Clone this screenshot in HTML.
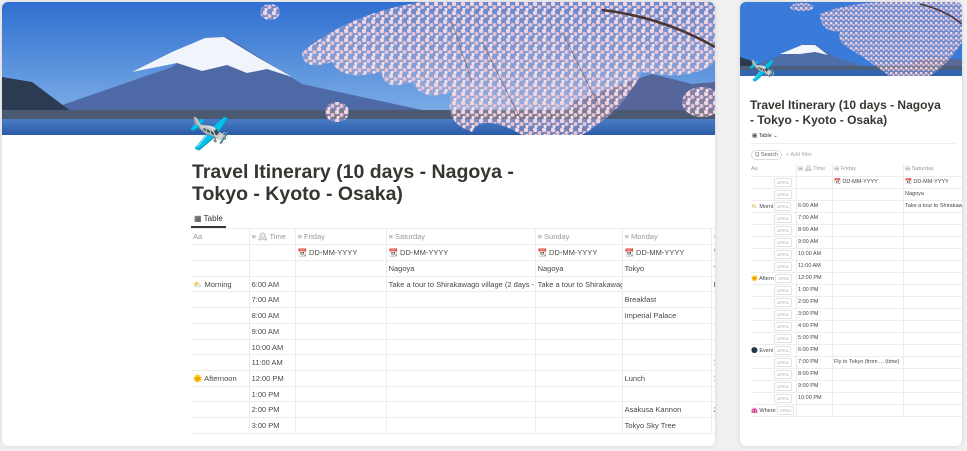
<!DOCTYPE html>
<html><head><meta charset="utf-8"><style>
*{margin:0;padding:0;box-sizing:border-box}
body{width:967px;height:451px;background:#f0f0f0;font-family:"Liberation Sans",sans-serif;color:#37352f;position:relative;overflow:hidden}
.card{position:absolute;background:#fff;border-radius:6px;overflow:hidden;box-shadow:0 0 4px rgba(0,0,0,.12)}
.abs{position:absolute}
table{border-collapse:collapse;position:absolute;table-layout:fixed;color:#4a4843}
td{border-bottom:1px solid #ededec;border-right:1px solid #ededec;white-space:nowrap;overflow:hidden;vertical-align:middle}
td:last-child{border-right:none}
.h td{color:#9b9a97}
.o{display:inline-block;border:1px solid #e3e3e3;border-radius:2px;color:#aaa;font-size:4px;padding:1px 2px;line-height:5px;margin-left:1px}
.r td:first-child{text-align:right;padding-right:4px}
</style></head><body>
<svg width="0" height="0" style="position:absolute"><defs>
<pattern id="bl" width="9" height="9" patternUnits="userSpaceOnUse"><rect width="9" height="9" fill="#d9b3c6" opacity=".35"/><circle cx="2" cy="2" r="2.3" fill="#f1d6e2"/><circle cx="6.5" cy="5" r="2" fill="#e7c3d4"/><circle cx="3" cy="7.5" r="1.6" fill="#f6e2ea"/></pattern>
<pattern id="bs" width="5" height="5" patternUnits="userSpaceOnUse"><rect width="5" height="5" fill="#d9b3c6" opacity=".35"/><circle cx="1.2" cy="1.2" r="1.3" fill="#f1d6e2"/><circle cx="3.6" cy="3" r="1.1" fill="#e7c3d4"/></pattern>
</defs></svg>

<div class="card" style="left:2px;top:2px;width:713px;height:444px">
<svg class="abs" style="left:0;top:0" width="713" height="133" viewBox="0 0 713 133">
<defs><linearGradient id="sk" x1="0" y1="0" x2="0" y2="1"><stop offset="0" stop-color="#2f6fd0"/><stop offset="1" stop-color="#8ab8ea"/></linearGradient>
<linearGradient id="lk" x1="0" y1="0" x2="0" y2="1"><stop offset="0" stop-color="#4a7cc4"/><stop offset="1" stop-color="#2a5aa8"/></linearGradient></defs>
<rect width="713" height="133" fill="url(#sk)"/>
<path d="M40 110 L170 65 L205 36 L225 35 L300 82 L420 108 L40 112Z" fill="#4d6aa6"/>
<path d="M130 70 L170 50 L203 36 L222 35 L255 55 L290 75 L265 67 L245 71 L225 63 L200 69 L175 61Z" fill="#f1f4fa"/>
<path d="M0 75 L30 80 L70 110 L100 118 L0 120Z" fill="#2c3b52"/>
<path d="M570 100 L620 82 L650 72 L690 82 L713 80 L713 120 L560 120Z" fill="#56669a"/>
<rect y="108" width="713" height="10" fill="#4b5a72"/>
<rect y="117" width="713" height="16" fill="url(#lk)"/>
<g fill="url(#bl)">
<path d="M300 50 Q350 10 420 0 L713 0 L713 60 Q690 80 640 70 Q620 110 580 133 L520 133 Q480 110 470 130 Q440 120 450 90 Q420 100 410 80 Q380 90 380 70 Q340 80 330 60 Q300 70 300 50Z"/>
<ellipse cx="700" cy="100" rx="20" ry="15"/><ellipse cx="335" cy="110" rx="12" ry="10"/><ellipse cx="268" cy="10" rx="10" ry="8"/>
</g>
<path d="M600 8 Q660 15 713 45" stroke="#4a3530" stroke-width="2.5" fill="none"/>
<path d="M480 40 L520 120 M560 30 L600 110 M450 20 L470 80" stroke="#6a4a4a" stroke-width="1" fill="none" opacity=".5"/>
</svg>
<div class="abs" style="left:186px;top:112px;font-size:34px">🛩️</div>
<div class="abs" style="left:190px;top:159px;font-size:19.5px;font-weight:bold;line-height:22px;color:#37352f">Travel Itinerary (10 days - Nagoya -<br>Tokyo - Kyoto - Osaka)</div>
<div class="abs" style="left:192px;top:212px;font-size:8px;">&#9638; Table</div>
<div class="abs" style="left:189px;top:224px;width:35px;height:2px;background:#37352f"></div>
<table style="left:189px;top:226px;width:560px;font-size:7.5px;border-top:1px solid #ededec">
<colgroup><col width="58"><col width="46"><col width="91"><col width="149"><col width="87"><col width="89"><col width="40"></colgroup>
<tr class="h" style="height:16px"><td>&nbsp;Aa</td><td>&nbsp;≡ 🕰 Time</td><td>&nbsp;≡ Friday</td><td>&nbsp;≡ Saturday</td><td>&nbsp;≡ Sunday</td><td>&nbsp;≡ Monday</td><td>&nbsp;≡</td></tr>
<tr style="height:16px"><td></td><td></td><td>&nbsp;📆 DD-MM-YYYY</td><td>&nbsp;📆 DD-MM-YYYY</td><td>&nbsp;📆 DD-MM-YYYY</td><td>&nbsp;📆 DD-MM-YYYY</td><td>&nbsp;📆</td></tr>
<tr style="height:16px"><td></td><td></td><td></td><td>&nbsp;Nagoya</td><td>&nbsp;Nagoya</td><td>&nbsp;Tokyo</td><td>&nbsp;T</td></tr>
<tr style="height:15px"><td>&nbsp;⛅ Morning</td><td>&nbsp;6:00 AM</td><td></td><td>&nbsp;Take a tour to Shirakawago village (2 days - 1</td><td>&nbsp;Take a tour to Shirakawago</td><td></td><td>&nbsp;D</td></tr>
<tr style="height:16px"><td></td><td>&nbsp;7:00 AM</td><td></td><td></td><td></td><td>&nbsp;Breakfast</td><td></td></tr>
<tr style="height:16px"><td></td><td>&nbsp;8:00 AM</td><td></td><td></td><td></td><td>&nbsp;Imperial Palace</td><td></td></tr>
<tr style="height:16px"><td></td><td>&nbsp;9:00 AM</td><td></td><td></td><td></td><td></td><td></td></tr>
<tr style="height:15px"><td></td><td>&nbsp;10:00 AM</td><td></td><td></td><td></td><td></td><td></td></tr>
<tr style="height:16px"><td></td><td>&nbsp;11:00 AM</td><td></td><td></td><td></td><td></td><td>&nbsp;1</td></tr>
<tr style="height:16px"><td>&nbsp;🌞 Afternoon</td><td>&nbsp;12:00 PM</td><td></td><td></td><td></td><td>&nbsp;Lunch</td><td>&nbsp;1</td></tr>
<tr style="height:15px"><td></td><td>&nbsp;1:00 PM</td><td></td><td></td><td></td><td></td><td></td></tr>
<tr style="height:16px"><td></td><td>&nbsp;2:00 PM</td><td></td><td></td><td></td><td>&nbsp;Asakusa Kannon</td><td>&nbsp;2</td></tr>
<tr style="height:16px"><td></td><td>&nbsp;3:00 PM</td><td></td><td></td><td></td><td>&nbsp;Tokyo Sky Tree</td><td></td></tr>
</table>
</div>

<div class="card" style="left:740px;top:2px;width:222px;height:444px">
<svg class="abs" style="left:0;top:0" width="222" height="74" viewBox="0 0 222 74">
<rect width="222" height="74" fill="#3a7ad8"/>
<path d="M10 65 L50 50 L64 42 L74 42 L95 55 L130 66 L10 68Z" fill="#4e6ea8"/>
<path d="M40 52 L62 43 L75 43 L88 53 L75 50 L60 52Z" fill="#f4f6fb"/>
<path d="M0 55 L15 60 L25 68 L0 68Z" fill="#2c3b52"/>
<path d="M170 60 L200 55 L222 58 L222 70 L165 70Z" fill="#5a6a96"/>
<rect y="64" width="222" height="4" fill="#4b5f7a"/><rect y="68" width="222" height="6" fill="#3466b0"/>
<g fill="url(#bs)"><path d="M80 12 Q110 0 150 0 L222 0 L222 40 Q210 60 190 74 L150 74 Q130 60 115 50 Q95 40 100 30 Q80 30 80 12Z"/><ellipse cx="62" cy="5" rx="12" ry="4"/></g>
<path d="M180 2 Q205 8 222 22" stroke="#4a3530" stroke-width="1.5" fill="none"/>
</svg>
<div class="abs" style="left:8px;top:56px;font-size:22px">🛩️</div>
<div class="abs" style="left:10px;top:96px;font-size:12px;font-weight:bold;line-height:15px">Travel Itinerary (10 days - Nagoya<br>- Tokyo - Kyoto - Osaka)</div>
<div class="abs" style="left:12px;top:131px;font-size:5.5px">&#9638; Table ⌄</div>
<div class="abs" style="left:10px;top:141px;width:205px;height:1px;background:#eee"></div>
<div class="abs" style="left:11px;top:148px;font-size:5.5px;border:1px solid #ddd;border-radius:6px;padding:1px 3px;color:#666">Q Search</div>
<div class="abs" style="left:46px;top:150px;font-size:5.5px;color:#aaa">+ Add filter</div>
<table class="r" style="left:11px;top:161px;width:215px;font-size:5.5px">
<colgroup><col width="45"><col width="36"><col width="71"><col width="63"></colgroup>
<tr class="h" style="height:13px"><td style="text-align:left">Aa</td><td>&nbsp;▤ 🕰 Time</td><td>&nbsp;▤ Friday</td><td>&nbsp;▤ Saturday</td></tr>
<tr style="height:12px"><td><span class="o">OPEN</span></td><td></td><td>&nbsp;📆 DD-MM-YYYY</td><td>&nbsp;📆 DD-MM-YYYY</td></tr>
<tr style="height:12px"><td><span class="o">OPEN</span></td><td></td><td></td><td>&nbsp;Nagoya</td></tr>
<tr style="height:12px"><td style="text-align:left">⛅ Morni<span class="o">OPEN</span></td><td>&nbsp;6:00 AM</td><td></td><td>&nbsp;Take a tour to Shirakawa</td></tr>
<tr style="height:12px"><td><span class="o">OPEN</span></td><td>&nbsp;7:00 AM</td><td></td><td></td></tr>
<tr style="height:12px"><td><span class="o">OPEN</span></td><td>&nbsp;8:00 AM</td><td></td><td></td></tr>
<tr style="height:12px"><td><span class="o">OPEN</span></td><td>&nbsp;9:00 AM</td><td></td><td></td></tr>
<tr style="height:12px"><td><span class="o">OPEN</span></td><td>&nbsp;10:00 AM</td><td></td><td></td></tr>
<tr style="height:12px"><td><span class="o">OPEN</span></td><td>&nbsp;11:00 AM</td><td></td><td></td></tr>
<tr style="height:12px"><td style="text-align:left">🌞 Aftern<span class="o">OPEN</span></td><td>&nbsp;12:00 PM</td><td></td><td></td></tr>
<tr style="height:12px"><td><span class="o">OPEN</span></td><td>&nbsp;1:00 PM</td><td></td><td></td></tr>
<tr style="height:12px"><td><span class="o">OPEN</span></td><td>&nbsp;2:00 PM</td><td></td><td></td></tr>
<tr style="height:12px"><td><span class="o">OPEN</span></td><td>&nbsp;3:00 PM</td><td></td><td></td></tr>
<tr style="height:12px"><td><span class="o">OPEN</span></td><td>&nbsp;4:00 PM</td><td></td><td></td></tr>
<tr style="height:12px"><td><span class="o">OPEN</span></td><td>&nbsp;5:00 PM</td><td></td><td></td></tr>
<tr style="height:12px"><td style="text-align:left">🌑 Eveni<span class="o">OPEN</span></td><td>&nbsp;6:00 PM</td><td></td><td></td></tr>
<tr style="height:12px"><td><span class="o">OPEN</span></td><td>&nbsp;7:00 PM</td><td>&nbsp;Fly to Tokyo (from ... (time)</td><td></td></tr>
<tr style="height:12px"><td><span class="o">OPEN</span></td><td>&nbsp;8:00 PM</td><td></td><td></td></tr>
<tr style="height:12px"><td><span class="o">OPEN</span></td><td>&nbsp;9:00 PM</td><td></td><td></td></tr>
<tr style="height:12px"><td><span class="o">OPEN</span></td><td>&nbsp;10:00 PM</td><td></td><td></td></tr>
<tr style="height:12px"><td style="text-align:left">🏩 Where<span class="o">OPEN</span></td><td></td><td></td><td></td></tr>
</table>
</div>
</body></html>
